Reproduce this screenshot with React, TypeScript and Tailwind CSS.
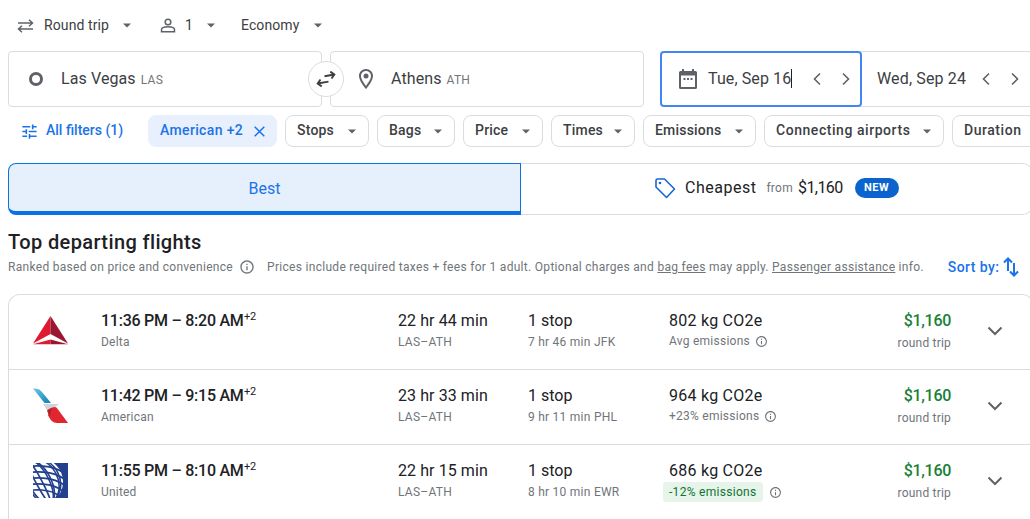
import React from "react";

const Caret = ({ className = "" }: { className?: string }) => (
  <svg width="10" height="5" viewBox="0 0 10 5" className={className}>
    <path d="M1 0.5h8L5 4.5z" fill="#5f6368" />
  </svg>
);

const Info = ({ size = 14, color = "#70757a" }: { size?: number; color?: string }) => (
  <svg width={size} height={size} viewBox="0 0 24 24" fill={color}>
    <path d="M11 7h2v2h-2zm0 4h2v6h-2zm1-9C6.48 2 2 6.48 2 12s4.48 10 10 10 10-4.48 10-10S17.52 2 12 2zm0 18c-4.41 0-8-3.59-8-8s3.59-8 8-8 8 3.59 8 8-3.59 8-8 8z" />
  </svg>
);

const Chev = ({ dir }: { dir: "l" | "r" }) => (
  <svg width="10" height="14" viewBox="0 0 10 14" fill="none" stroke="#5f6368" strokeWidth="1.6">
    <path d={dir === "l" ? "M8 1.5L2.5 7 8 12.5" : "M2 1.5L7.5 7 2 12.5"} />
  </svg>
);

const Delta = () => (
  <svg width="35" height="35" viewBox="0 0 35 35">
    <path d="M17.5 3L0 30.5 17.5 21z" fill="#e01933" />
    <path d="M17.5 3L35 30.5 17.5 21z" fill="#9b1631" />
    <path d="M0 31.2L17.5 24 17.5 31.2z" fill="#e01933" />
    <path d="M35 31.2L17.5 24 17.5 31.2z" fill="#9b1631" />
    <path d="M0 31.2L17.5 23 35 31.2 17.5 26.5z" fill="#fff" />
  </svg>
);

const American = () => (
  <svg width="35" height="35" viewBox="0 0 35 35">
    <defs>
      <linearGradient id="aa-blue" x1="0" y1="0" x2="1" y2="1">
        <stop offset="0" stopColor="#6fc7e6" />
        <stop offset="1" stopColor="#0f7fb5" />
      </linearGradient>
    </defs>
    <path d="M0 0.5C5 0.5 7 1.5 9 4L18 15H11.5z" fill="url(#aa-blue)" />
    <path d="M10 16H26L23 18.5C20 19 18.5 21 17 25L14.5 23z" fill="#cfd4da" />
    <path d="M19.5 19.5C20.5 19 22.5 18.5 23.5 19.5L35 35H24C20 35 17 32 15 27z" fill="#e0262f" />
    <path d="M14 22.500C15.500 21 18.500 19.500 20 19.500 18 22 17.500 26 16.500 29z" fill="#b51f2a" />
  </svg>
);

const United = () => {
  const meridians = [-26, -17, -8, 1, 10, 19];
  return (
    <svg width="35" height="35" viewBox="0 0 35 35">
      <rect width="35" height="35" fill="#23408f" />
      <circle cx="6" cy="19" r="24" fill="#fff" />
      <g fill="none" stroke="#23408f" strokeWidth="1.6">
        {meridians.map((m) => (
          <ellipse key={m} cx="6" cy="19" rx={Math.abs(m) + 2} ry="24" transform="rotate(-28 6 19)" />
        ))}
        <path d="M-12 6C0 1 20 2 31 10" />
        <path d="M-12 12C0 7 21 8 31 16" />
        <path d="M-12 18C0 13 21 14 31 22" />
        <path d="M-12 24C0 19 20 20 30 28" />
        <path d="M-12 30C0 25 18 26 26 33" />
      </g>
    </svg>
  );
};

const Filter = ({ label, w, track = "tracking-[0.2px]" }: { label: string; w: string; track?: string }) => (
  <div className={`${w} h-8 shrink-0 rounded-lg border border-[#dadce0] flex items-center justify-between pl-[11px] pr-[11px] text-[14px] font-medium text-[#3c4043] ${track}`}>
    <span className="whitespace-nowrap pb-[1px]">{label}</span>
    <Caret />
  </div>
);

const Top = ({ icon, label, w }: { icon?: React.ReactNode; label: string; w: string }) => (
  <div className={`${w} flex items-center shrink-0`}>
    {icon}
    <span className="text-[14px] text-[#3c4043] tracking-[0.1px]">{label}</span>
    <Caret className="ml-auto" />
  </div>
);

type F = {
  logo: React.ReactNode;
  time: string;
  air: string;
  dur: string;
  via: string;
  co2: string;
  em: string;
  green?: boolean;
};

const flights: F[] = [
  { logo: <Delta />, time: "11:36 PM – 8:20 AM", air: "Delta", dur: "22 hr 44 min", via: "7 hr 46 min JFK", co2: "802 kg CO2e", em: "Avg emissions" },
  { logo: <American />, time: "11:42 PM – 9:15 AM", air: "American", dur: "23 hr 33 min", via: "9 hr 11 min PHL", co2: "964 kg CO2e", em: "+23% emissions" },
  { logo: <United />, time: "11:55 PM – 8:10 AM", air: "United", dur: "22 hr 15 min", via: "8 hr 10 min EWR", co2: "686 kg CO2e", em: "-12% emissions", green: true },
];

const Row = ({ f, last }: { f: F; last: boolean }) => (
  <div className={`h-[75px] flex shrink-0 ${last ? "" : "border-b border-[#dadce0]"}`}>
    <div className="w-[24px] shrink-0" />
    <div className="w-[68px] shrink-0 pt-[18px]">{f.logo}</div>
    <div className="w-[297px] shrink-0 pt-[14px]">
      <div className="h-6 flex text-[16px] leading-6 font-medium text-[#202124] tracking-[-0.25px]">
        {f.time}
        <span className="text-[11px] leading-[16px] ml-[0.5px] font-normal">+2</span>
      </div>
      <div className="text-[12px] leading-[18px] text-[#70757a] tracking-[0.2px]">{f.air}</div>
    </div>
    <div className="w-[130px] shrink-0 pt-[14px]">
      <div className="text-[16px] leading-6 text-[#202124] tracking-[0.08px]">{f.dur}</div>
      <div className="text-[12px] leading-[18px] text-[#70757a] tracking-[0.25px]">LAS–ATH</div>
    </div>
    <div className="w-[141px] shrink-0 pt-[14px]">
      <div className="text-[16px] leading-6 text-[#202124]">1 stop</div>
      <div className="text-[12px] leading-[18px] text-[#70757a] tracking-[0.25px]">{f.via}</div>
    </div>
    <div className="w-[282px] shrink-0 pt-[14px] flex flex-col relative">
      <div className="text-[16px] leading-6 text-[#202124] tracking-[0.25px]">{f.co2}</div>
      {f.green ? (
        <div className="flex items-center mt-[-1px] ml-[-6px]">
          <span className="h-5 w-[100px] rounded-[3px] bg-[#e6f4ea] text-[#137333] text-[12px] leading-5 pl-[6px] tracking-[0.3px] whitespace-nowrap">{f.em}</span>
          <span className="ml-[6px] flex"><Info size={13} /></span>
        </div>
      ) : (
        <div className="flex items-center h-[16px] text-[12px] text-[#70757a] tracking-[0.25px] whitespace-nowrap">
          {f.em}
          <span className="ml-[5px] flex"><Info size={13} /></span>
        </div>
      )}
    </div>
    <div className="w-[0px] shrink-0 pt-[14px] relative flex flex-col items-end">
      <div className="text-[16px] leading-6 font-medium text-[#188038] tracking-[-0.3px]">$1,160</div>
      <div className="text-[12px] leading-[18px] mt-[1px] text-[#70757a] tracking-[0.2px] whitespace-nowrap">round trip</div>
    </div>
    <div className="pl-[36px] pt-[31px] shrink-0">
      <svg width="16" height="10" viewBox="0 0 16 10" fill="none" stroke="#5f6368" strokeWidth="2">
        <path d="M1.500 1.500L8 8l6.500-6.500" />
      </svg>
    </div>
  </div>
);

export default function App() {
  return (
    <div className="w-[1030px] h-[519px] overflow-hidden bg-white font-['Roboto',sans-serif] flex flex-col">
      {/* trip options */}
      <div className="h-[51px] shrink-0 flex items-center pl-[17px]">
        <Top
          w="w-[115px]"
          label="Round trip"
          icon={
            <svg width="17" height="14" viewBox="0 0 17 14" fill="none" stroke="#5f6368" strokeWidth="1.5" className="mr-[10px]">
              <path d="M1 4h14M12 0.800L15.500 4 12 7.200" />
              <path d="M16 10H2M5 6.800L1.500 10 5 13.200" />
            </svg>
          }
        />
        <div className="w-[28px] shrink-0" />
        <Top
          w="w-[56px]"
          label="1"
          icon={
            <svg width="16" height="15" viewBox="0 0 16 15" fill="none" stroke="#5f6368" strokeWidth="1.5" className="mr-[9px]">
              <circle cx="8" cy="4" r="2.800" />
              <path d="M1.500 13.800v-2c0-2 3.500-3 6.500-3s6.500 1 6.500 3v2z" />
            </svg>
          }
        />
        <div className="w-[25px] shrink-0" />
        <Top w="w-[82px]" label="Economy" />
      </div>

      {/* search */}
      <div className="h-[56px] shrink-0 flex pl-[8px]">
        <div className="w-[314px] rounded border border-[#dadce0] flex items-center shrink-0">
          <span className="w-[14px] h-[14px] ml-[20px] rounded-full border-[3px] border-[#5f6368]" />
          <span className="ml-[18px] text-[16px] text-[#3c4043] tracking-[0.1px]">Las Vegas</span>
          <span className="ml-[5px] text-[12px] text-[#70757a] mt-[2px] tracking-[0.3px]">LAS</span>
        </div>
        <div className="w-[8px] shrink-0 relative z-10">
          <div className="absolute left-[-14px] top-[10px] w-9 h-9 rounded-full bg-white border border-[#dadce0] flex items-center justify-center">
            <svg width="22" height="18" viewBox="0 0 22 18" fill="none" stroke="#3c4043" strokeWidth="1.900" className="rotate-[-10deg]">
              <path d="M10 6h10M16.500 2.500L20 6l-3.500 3.500" />
              <path d="M13 12H2M5.500 8.500L2 12l3.500 3.500" />
            </svg>
          </div>
        </div>
        <div className="w-[314px] rounded border border-[#dadce0] flex items-center shrink-0">
          <svg width="24" height="24" viewBox="0 0 24 24" fill="#5f6368" className="ml-[23px]">
            <path d="M12 2C8.130 2 5 5.130 5 9c0 5.250 7 13 7 13s7-7.750 7-13c0-3.870-3.130-7-7-7zM7 9c0-2.760 2.240-5 5-5s5 2.240 5 5c0 2.880-2.880 7.190-5 9.880C9.920 16.210 7 11.850 7 9z" />
            <circle cx="12" cy="9" r="2.500" />
          </svg>
          <span className="ml-[13px] text-[16px] text-[#3c4043] tracking-[0.1px]">Athens</span>
          <span className="ml-[5px] text-[12px] text-[#70757a] mt-[2px] tracking-[0.3px]">ATH</span>
        </div>
        <div className="w-[16px] shrink-0" />
        <div className="w-[202px] shrink-0 rounded border-2 border-[#4285f4] flex items-center z-10">
          <svg width="18" height="20" viewBox="0 0 18 20" className="ml-[17px]">
            <path fillRule="evenodd" fill="#5f6368" d="M3 0h2v2h8V0h2v2h1.400A1.600 1.600 0 0 1 18 3.600v14.800a1.600 1.600 0 0 1-1.600 1.600H1.600A1.600 1.600 0 0 1 0 18.400V3.600A1.600 1.600 0 0 1 1.600 2H3zM2 6.500V18h14V6.500z" />
            <rect x="4.500" y="9" width="2" height="2" fill="#5f6368" />
            <rect x="8" y="9" width="2" height="2" fill="#5f6368" />
            <rect x="11.500" y="9" width="2" height="2" fill="#5f6368" />
          </svg>
          <span className="ml-[11px] mb-[1px] text-[16px] text-[#3c4043] border-r border-[#202124] leading-[19px] tracking-[0.1px]">Tue, Sep 16</span>
          <span className="ml-[20px] flex"><Chev dir="l" /></span>
          <span className="ml-[19px] flex"><Chev dir="r" /></span>
        </div>
        <div className="flex-1 ml-[-2px] mr-[-2px] rounded-r border border-l-0 border-[#dadce0] flex items-center">
          <span className="ml-[17px] text-[16px] text-[#3c4043] tracking-[0.15px] whitespace-nowrap">Wed, Sep 24</span>
          <span className="ml-[15px] flex"><Chev dir="l" /></span>
          <span className="ml-[19px] flex"><Chev dir="r" /></span>
        </div>
      </div>

      {/* filters */}
      <div className="h-[32px] mt-[8px] shrink-0 flex items-center pl-[20px]">
        <svg width="19" height="19" viewBox="0 0 24 24" fill="#1a73e8" className="shrink-0">
          <path d="M3 17v2h6v-2H3zM3 5v2h10V5H3zm10 16v-2h8v-2h-8v-2h-2v6h2zM7 9v2H3v2h4v2h2V9H7zm14 4v-2H11v2h10zm-6-4h2V7h4V5h-4V3h-2v6z" />
        </svg>
        <span className="ml-[7px] w-[102px] shrink-0 pb-[1px] text-[14px] font-medium text-[#1a73e8] whitespace-nowrap">All filters (1)</span>
        <div className="w-[129px] h-8 shrink-0 rounded-lg bg-[#e8f0fe] flex items-center pl-[12px] text-[14px] font-medium text-[#1a73e8] tracking-[0.35px]">
          <span className="pb-[1px]">American +2</span>
          <svg width="11" height="11" viewBox="0 0 11 11" fill="none" stroke="#1a73e8" strokeWidth="1.500" className="ml-[11px]">
            <path d="M.7.7l9.600 9.600M10.300.7L.7 10.300" />
          </svg>
        </div>
        <div className="ml-[8px] flex gap-[8px]">
          <Filter label="Stops" w="w-[84px]" />
          <Filter label="Bags" w="w-[78px]" />
          <Filter label="Price" w="w-[80px]" />
          <Filter label="Times" w="w-[84px]" />
          <Filter label="Emissions" w="w-[113px]" />
          <Filter label="Connecting airports" w="w-[180px]" track="tracking-[0.55px]" />
          <Filter label="Duration" w="w-[100px]" track="tracking-[0.55px]" />
        </div>
      </div>

      {/* tabs */}
      <div className="h-[52px] mt-[16px] shrink-0 flex pl-[8px] w-[1034px]">
        <div className="w-[513px] shrink-0 rounded-l-lg border border-b-[4px] border-[#0b72e6] bg-[#e6f0fc] flex items-center justify-center text-[16px] text-[#1a73e8] pt-[2px]">
          Best
        </div>
        <div className="flex-1 rounded-r-xl border border-l-0 border-[#dadce0] flex items-center pl-[133px] pb-[2px]">
          <svg width="22" height="22" viewBox="0 0 22 22" fill="none" stroke="#1967d2" strokeWidth="1.600">
            <path d="M2 3.500A1.500 1.500 0 0 1 3.500 2H10.500L20.500 12 12.500 20.500 2 10z" strokeLinejoin="round" />
            <circle cx="6" cy="6" r="1.300" fill="#1967d2" stroke="none" />
          </svg>
          <span className="ml-[9px] text-[16px] text-[#202124] tracking-[0.5px]">Cheapest</span>
          <span className="ml-[10px] text-[12px] text-[#70757a] tracking-[0.3px]">from</span>
          <span className="ml-[5px] text-[16px] text-[#202124] tracking-[-0.6px]">$1,160</span>
          <span className="ml-[12px] w-[44px] h-[20px] rounded-full bg-[#0b63ce] text-white text-[11px] font-bold tracking-[0.6px] flex items-center justify-center">NEW</span>
        </div>
      </div>

      {/* heading */}
      <div className="pl-[8px] pt-[14px] shrink-0">
        <h2 className="text-[20px] leading-[26px] font-medium text-[#202124] tracking-[0.38px]">Top departing flights</h2>
        <div className="flex items-center h-[18px] mt-[3px] text-[12px] text-[#70757a] tracking-[0.3px] whitespace-nowrap">
          <span>Ranked based on price and convenience</span>
          <span className="ml-[6px] flex"><Info size={16} /></span>
          <span className="ml-[12px]">
            Prices include required taxes + fees for 1 adult. Optional charges and <span className="underline">bag fees</span> may apply. <span className="underline">Passenger assistance</span> info.
          </span>
          <span className="ml-[24px] text-[14px] font-medium text-[#1a73e8] tracking-[0.4px]">Sort by:</span>
          <svg width="18" height="22" viewBox="0 0 18 22" fill="none" stroke="#1a73e8" strokeWidth="2" className="ml-[3px] shrink-0">
            <path d="M6 15V3M2 6.500L6 2.500l4 4" />
            <path d="M12 7v12M8 15.500l4 4 4-4" />
          </svg>
        </div>
      </div>

      {/* list */}
      <div className="mt-[18px] ml-[8px] shrink-0 w-[1026px] h-[240px] rounded-t-xl border border-b-0 border-[#dadce0] flex flex-col">
        {flights.map((f, i) => (
          <Row key={f.air} f={f} last={i === flights.length - 1} />
        ))}
      </div>
    </div>
  );
}
